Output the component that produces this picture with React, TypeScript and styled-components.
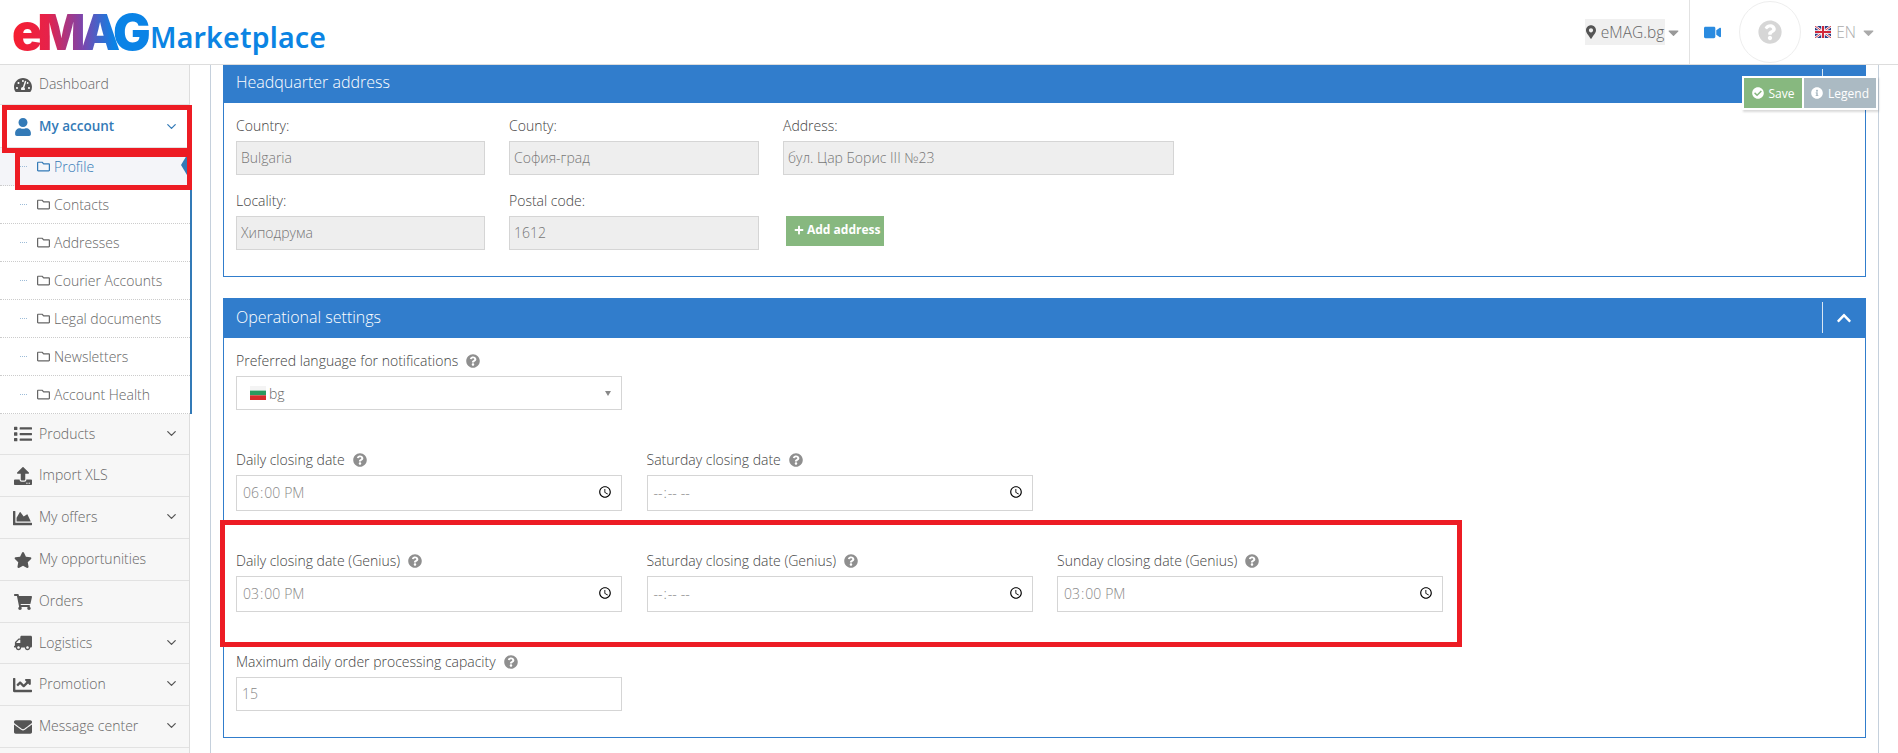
import React from "react";
import styled, { createGlobalStyle } from "styled-components";
import {
  FaTachometerAlt,
  FaUser,
  FaList,
  FaUpload,
  FaChartArea,
  FaStar,
  FaShoppingCart,
  FaTruck,
  FaChartLine,
  FaEnvelope,
  FaRegFolder,
  FaCheckCircle,
  FaInfoCircle,
  FaMapMarkerAlt,
  FaVideo,
  FaQuestionCircle,
  FaChevronUp,
  FaPlus,
  FaCaretDown,
} from "react-icons/fa";
import { ChevronDown } from "lucide-react";

const BLUE = "#317dcc";

const GlobalStyle = createGlobalStyle`
  html, body {
    margin: 0;
    padding: 0;
    height: 753px;
    overflow: hidden;
    background: #fff;
    font-family: "Open Sans", "Noto Sans", sans-serif;
    font-size: 14px;
    font-weight: 300;
    color: #555;
  }
  * { box-sizing: border-box; }
`;

const Page = styled.div`
  position: relative;
  width: 1898px;
  height: 753px;
  overflow: hidden;
`;

const TopBar = styled.header`
  display: flex;
  align-items: center;
  height: 65px;
  padding: 0 24px 0 12px;
  border-bottom: 1px solid #ddd;
`;

const Logo = styled.div`
  display: flex;
  align-items: flex-end;
  height: 48px;
`;

const LogoMark = styled.span`
  font-family: "Inter", "Liberation Sans", sans-serif;
  font-weight: 900;
  font-size: 50px;
  line-height: 48px;
  letter-spacing: -4.8px;
  background: linear-gradient(90deg, #f71e2f 0%, #e6224a 25%, #7a46ae 50%, #0a83e6 72%);
  -webkit-background-clip: text;
  background-clip: text;
  color: transparent;
  padding-right: 8px;
  margin-right: -4px;
`;

const LogoWord = styled.span`
  font-family: "Noto Sans", sans-serif;
  font-weight: 600;
  font-size: 28.5px;
  line-height: 36px;
  color: #0b84e3;
  letter-spacing: 0.2px;
  margin-bottom: 1px;
`;

const TopRight = styled.div`
  margin-left: auto;
  display: flex;
  align-items: center;
  height: 64px;
`;

const MarketChip = styled.span`
  display: flex;
  align-items: center;
  gap: 5px;
  height: 26px;
  padding: 0 1px;
  background: #f0f0f0;
  font-size: 15.5px;
  color: #666;
  svg { color: #555; font-size: 14px; width: 10px; }
`;

const Caret = styled(FaCaretDown)<{ $color: string }>`
  width: 11px;
  height: 17px;
  margin-left: 3px;
  color: ${(p) => p.$color};
`;

const TopDivider = styled.span`
  width: 1px;
  height: 64px;
  background: #e2e2e2;
  margin: 0 14px 0 10px;
`;

const VideoIcon = styled(FaVideo)`
  color: #2a8be0;
  font-size: 17px;
`;

const HelpCircle = styled.span`
  display: flex;
  align-items: center;
  justify-content: center;
  width: 62px;
  height: 62px;
  margin: 0 14px 0 18px;
  border: 1px solid #eee;
  border-radius: 50%;
  color: #d6d6d6;
  font-size: 24px;
`;

const LangText = styled.span`
  margin: 0 4px 0 5px;
  font-size: 15.5px;
  color: #aaa;
`;

const Body = styled.div`
  display: flex;
  height: 688px;
`;

const Sidebar = styled.aside`
  flex: none;
  width: 190px;
  border-right: 1px solid #ddd;
  background: #f7f7f7;
`;

const NavRow = styled.div<{ $h?: number; $active?: boolean }>`
  display: flex;
  align-items: center;
  height: ${(p) => p.$h ?? 42}px;
  padding: 0 10px ${(p) => (p.$active ? 0 : 2)}px 13px;
  border-bottom: 1px solid #e2e2e2;
  background: ${(p) => (p.$active ? "#fff" : "#f7f7f7")};
  color: ${(p) => (p.$active ? "#337ab7" : "#666")};
  font-size: ${(p) => (p.$active ? 13.5 : 14)}px;
  font-weight: ${(p) => (p.$active ? 600 : 300)};
`;

const NavIcon = styled.span<{ $active?: boolean }>`
  display: flex;
  justify-content: center;
  width: 19px;
  margin: 2px 7px 0 0;
  font-size: 18px;
  color: ${(p) => (p.$active ? "#337ab7" : "#555")};
`;

const NavLabel = styled.span`
  flex: 1;
`;

const NavChevron = styled(ChevronDown)`
  color: #555;
`;

const SubMenu = styled.div`
  position: relative;
  width: 192px;
  border-right: 2px solid #337ab7;
  background: #fff;
  &::before {
    content: "";
    position: absolute;
    top: 0;
    bottom: 0;
    left: 18px;
    border-left: 1px dotted #9dbcd8;
  }
`;

const SubRow = styled.div<{ $active?: boolean }>`
  position: relative;
  display: flex;
  align-items: center;
  gap: 4px;
  height: 38px;
  padding-left: 37px;
  border-bottom: 1px dotted #ccc;
  background: ${(p) => (p.$active ? "#f4f5f9" : "#fff")};
  color: ${(p) => (p.$active ? "#337ab7" : "#666")};
  svg { font-size: 13px; color: ${(p) => (p.$active ? "#337ab7" : "#666")}; }
  &::before {
    content: "";
    position: absolute;
    left: 20px;
    top: 18px;
    width: 7px;
    border-top: 1px dotted #9dbcd8;
  }
`;

const ActiveArrow = styled.span`
  position: absolute;
  right: 3px;
  top: 7px;
  border-style: solid;
  border-width: 10px 6px 10px 0;
  border-color: transparent #337ab7 transparent transparent;
`;

const Content = styled.main`
  position: relative;
  flex: none;
  width: 1669px;
  margin-left: 20px;
  padding: 0 12px;
  border-left: 1px solid #c5d0dc;
  border-right: 1px solid #c5d0dc;
`;

const Panel = styled.section`
  margin-bottom: 21px;
`;

const PanelHead = styled.div<{ $h: number }>`
  display: flex;
  align-items: center;
  justify-content: space-between;
  height: ${(p) => p.$h}px;
  padding: 0 14px 0 13px;
  background: ${BLUE};
  color: #fff;
  font-size: 16px;
`;

const PanelTitle = styled.span<{ $up: number }>`
  margin-bottom: ${(p) => p.$up}px;
`;

const PanelToggle = styled.span`
  display: flex;
  align-items: center;
  align-self: stretch;
  margin: 4px 0 5px;
  padding-left: 13px;
  border-left: 1px solid #d9e6f3;
  font-size: 16px;
`;

const PanelBody = styled.div`
  padding: 13px 12px 26px;
  border: 1px solid ${BLUE};
  border-top: 0;
`;

const AddressGrid = styled.div`
  display: grid;
  grid-template-columns: 249px 250px 391px;
  column-gap: 24px;
  row-gap: 16px;
  align-items: start;
`;

const SettingsGrid = styled.div<{ $gap?: number }>`
  display: grid;
  grid-template-columns: repeat(3, 386px);
  column-gap: 24.5px;
  margin-bottom: ${(p) => p.$gap ?? 40}px;
`;

const Field = styled.div`
  display: flex;
  flex-direction: column;
`;

const Label = styled.label`
  display: flex;
  align-items: center;
  gap: 8px;
  height: 20px;
  margin-bottom: 5px;
  padding-bottom: 1px;
  color: #444;
  svg { color: #8f8f8f; font-size: 14px; }
`;

const TextInput = styled.input`
  width: 100%;
  height: 34px;
  padding: 0 5px 2px;
  border: 1px solid #d5d5d5;
  border-radius: 0;
  outline: none;
  background: #fff;
  color: #888;
  font-family: inherit;
  font-size: 14px;
  font-weight: 300;
  &:disabled { background: #eee; color: #777; padding-left: 4px; }
`;

const TimeInput = styled(TextInput)`
  height: 36px;
`;

const SelectBox = styled.div`
  position: relative;
  display: flex;
  align-items: center;
  gap: 3px;
  height: 34px;
  padding-left: 13px;
  border: 1px solid #d5d5d5;
  color: #666;
`;

const SelectCaret = styled.span`
  position: absolute;
  right: 10px;
  top: 14px;
  border-style: solid;
  border-width: 5px 3px 0;
  border-color: #888 transparent transparent;
`;

const AddButton = styled.button`
  display: flex;
  align-items: center;
  gap: 3px;
  width: 98px;
  height: 30px;
  margin: 25px 0 0 3px;
  padding: 0 0 3px 8px;
  border: 0;
  background: #87b87f;
  color: #fff;
  font-family: inherit;
  font-size: 12px;
  font-weight: 700;
  svg { font-size: 10px; }
`;

const FloatBar = styled.div`
  position: absolute;
  top: 11px;
  right: 0;
  display: flex;
  gap: 2px;
  padding: 2px;
  background: #fff;
  box-shadow: 1px 2px 2px rgba(0, 0, 0, 0.15);
`;

const FloatButton = styled.span<{ $bg: string; $w: number }>`
  display: flex;
  align-items: center;
  justify-content: center;
  gap: 5px;
  width: ${(p) => p.$w}px;
  height: 30px;
  background: ${(p) => p.$bg};
  color: #fff;
  font-size: 12px;
  font-weight: 400;
`;

const Highlight = styled.div<{ $l: number; $t: number; $w: number; $h: number }>`
  position: absolute;
  left: ${(p) => p.$l}px;
  top: ${(p) => p.$t}px;
  width: ${(p) => p.$w}px;
  height: ${(p) => p.$h}px;
  border: 5px solid #ed1c24;
  pointer-events: none;
`;

const BgFlag = () => (
  <svg width="16" height="14" viewBox="0 0 16 14">
    <rect width="16" height="4.6" fill="#f4f4f4" />
    <rect y="4.6" width="16" height="4.7" fill="#2a9a5f" />
    <rect y="9.3" width="16" height="4.7" fill="#d62b2b" />
  </svg>
);

const UkFlag = () => (
  <svg width="16" height="12" viewBox="0 0 16 12">
    <rect width="16" height="12" fill="#2b3f87" />
    <path d="M0 0 16 12M16 0 0 12" stroke="#fff" strokeWidth="2.4" />
    <path d="M0 0 16 12M16 0 0 12" stroke="#d0273a" strokeWidth="0.9" />
    <path d="M8 0v12M0 6h16" stroke="#fff" strokeWidth="3.6" />
    <path d="M8 0v12M0 6h16" stroke="#d0273a" strokeWidth="2" />
  </svg>
);

const subItems = ["Profile", "Contacts", "Addresses", "Courier Accounts", "Legal documents", "Newsletters", "Account Health"];

const navItems = [
  { label: "Products", icon: <FaList />, arrow: true, h: 41 },
  { label: "Import XLS", icon: <FaUpload />, arrow: false },
  { label: "My offers", icon: <FaChartArea size={20} />, arrow: true },
  { label: "My opportunities", icon: <FaStar />, arrow: false },
  { label: "Orders", icon: <FaShoppingCart />, arrow: false },
  { label: "Logistics", icon: <FaTruck style={{ transform: "scaleX(-1)" }} />, arrow: true, h: 41 },
  { label: "Promotion", icon: <FaChartLine size={20} />, arrow: true },
  { label: "Message center", icon: <FaEnvelope />, arrow: true },
];

function TimeField({ label, value }: { label: string; value: string }) {
  return (
    <Field>
      <Label>
        {label} <FaQuestionCircle />
      </Label>
      <TimeInput type="time" defaultValue={value} />
    </Field>
  );
}

function AddressField({ label, value }: { label: string; value: string }) {
  return (
    <Field>
      <Label>{label}</Label>
      <TextInput disabled defaultValue={value} />
    </Field>
  );
}

export default function App() {
  return (
    <Page>
      <GlobalStyle />
      <TopBar>
        <Logo>
          <LogoMark>eMAG</LogoMark>
          <LogoWord>Marketplace</LogoWord>
        </Logo>
        <TopRight>
          <MarketChip>
            <FaMapMarkerAlt />
            eMAG.bg
          </MarketChip>
          <Caret $color="#999" />
          <TopDivider />
          <VideoIcon />
          <HelpCircle>
            <FaQuestionCircle />
          </HelpCircle>
          <UkFlag />
          <LangText>EN</LangText>
          <Caret $color="#aaa" />
        </TopRight>
      </TopBar>

      <Body>
        <Sidebar>
          <NavRow $h={40}>
            <NavIcon>
              <FaTachometerAlt />
            </NavIcon>
            <NavLabel>Dashboard</NavLabel>
          </NavRow>
          <NavRow $h={43} $active>
            <NavIcon $active>
              <FaUser />
            </NavIcon>
            <NavLabel>My account</NavLabel>
            <ChevronDown size={15} strokeWidth={2} />
          </NavRow>
          <SubMenu>
            {subItems.map((item, i) => (
              <SubRow key={item} $active={i === 0}>
                <FaRegFolder />
                {item}
                {i === 0 && <ActiveArrow />}
              </SubRow>
            ))}
          </SubMenu>
          {navItems.map((item) => (
            <NavRow key={item.label} $h={item.h}>
              <NavIcon>{item.icon}</NavIcon>
              <NavLabel>{item.label}</NavLabel>
              {item.arrow && <NavChevron size={15} strokeWidth={2} />}
            </NavRow>
          ))}
        </Sidebar>

        <Content>
          <Panel>
            <PanelHead $h={38}>
              <PanelTitle $up={4}>Headquarter address</PanelTitle>
              <PanelToggle>
                <FaChevronUp />
              </PanelToggle>
            </PanelHead>
            <PanelBody>
              <AddressGrid>
                <AddressField label="Country:" value="Bulgaria" />
                <AddressField label="County:" value="София-град" />
                <AddressField label="Address:" value="бул. Цар Борис III №23" />
                <AddressField label="Locality:" value="Хиподрума" />
                <AddressField label="Postal code:" value="1612" />
                <AddButton>
                  <FaPlus /> Add address
                </AddButton>
              </AddressGrid>
            </PanelBody>
          </Panel>

          <Panel>
            <PanelHead $h={40}>
              <PanelTitle $up={2}>Operational settings</PanelTitle>
              <PanelToggle>
                <FaChevronUp />
              </PanelToggle>
            </PanelHead>
            <PanelBody>
              <SettingsGrid>
                <Field>
                  <Label>
                    Preferred language for notifications <FaQuestionCircle />
                  </Label>
                  <SelectBox>
                    <BgFlag />
                    bg
                    <SelectCaret />
                  </SelectBox>
                </Field>
              </SettingsGrid>
              <SettingsGrid>
                <TimeField label="Daily closing date" value="18:00" />
                <TimeField label="Saturday closing date" value="" />
              </SettingsGrid>
              <SettingsGrid>
                <TimeField label="Daily closing date (Genius)" value="15:00" />
                <TimeField label="Saturday closing date (Genius)" value="" />
                <TimeField label="Sunday closing date (Genius)" value="15:00" />
              </SettingsGrid>
              <SettingsGrid $gap={0}>
                <Field>
                  <Label>
                    Maximum daily order processing capacity <FaQuestionCircle />
                  </Label>
                  <TextInput defaultValue="15" />
                </Field>
              </SettingsGrid>
            </PanelBody>
          </Panel>

          <FloatBar>
            <FloatButton $bg="#87b87f" $w={58}>
              <FaCheckCircle /> Save
            </FloatButton>
            <FloatButton $bg="#abbac3" $w={72}>
              <FaInfoCircle /> Legend
            </FloatButton>
          </FloatBar>
        </Content>
      </Body>

      <Highlight $l={2} $t={105} $w={190} $h={48} />
      <Highlight $l={15} $t={152} $w={177} $h={38} />
      <Highlight $l={220} $t={520} $w={1242} $h={127} />
    </Page>
  );
}
